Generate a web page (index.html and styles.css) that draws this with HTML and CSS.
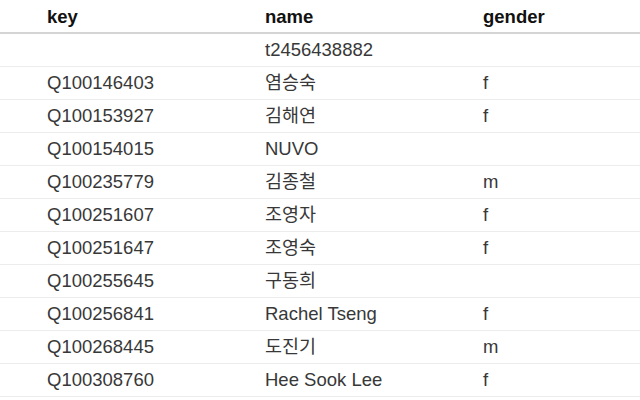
FILE: index.html
```html
<!DOCTYPE html>
<html lang="ko">
<head>
<meta charset="utf-8">
<link rel="stylesheet" href="styles.css">
</head>
<body>
<table class="data">
  <colgroup>
    <col class="col-key">
    <col class="col-name">
    <col class="col-gender">
  </colgroup>
  <thead>
    <tr><th>key</th><th>name</th><th>gender</th></tr>
  </thead>
  <tbody>
    <tr><td></td><td>t2456438882</td><td></td></tr>
    <tr><td>Q100146403</td><td>염승숙</td><td>f</td></tr>
    <tr><td>Q100153927</td><td>김해연</td><td>f</td></tr>
    <tr><td>Q100154015</td><td>NUVO</td><td></td></tr>
    <tr><td>Q100235779</td><td>김종철</td><td>m</td></tr>
    <tr><td>Q100251607</td><td>조영자</td><td>f</td></tr>
    <tr><td>Q100251647</td><td>조영숙</td><td>f</td></tr>
    <tr><td>Q100255645</td><td>구동희</td><td></td></tr>
    <tr><td>Q100256841</td><td>Rachel Tseng</td><td>f</td></tr>
    <tr><td>Q100268445</td><td>도진기</td><td>m</td></tr>
    <tr><td>Q100308760</td><td>Hee Sook Lee</td><td>f</td></tr>
  </tbody>
</table>
</body>
</html>
```

FILE: styles.css
```css
html, body {
  margin: 0;
  padding: 0;
  background: #ffffff;
  overflow: hidden;
}
body {
  font-family: "Liberation Sans", Arial, "Noto Sans CJK KR", sans-serif;
  font-size: 18.5px;
  color: #383838;
}
.data {
  border-collapse: collapse;
  width: 640px;
  table-layout: fixed;
}
.col-key, .col-name {
  width: 218px;
}
.col-gender {
  width: 204px;
}
.data th, .data td {
  text-align: left;
  padding: 5px 0 5px 47px;
  line-height: 22px;
  height: 22px;
  white-space: nowrap;
  overflow: hidden;
}
.data th {
  font-weight: bold;
  color: #111111;
  padding-top: 6px;
  padding-bottom: 4px;
  border-bottom: 2px solid #d4d4d4;
}
.data td {
  border-bottom: 1px solid #ececec;
}
```
